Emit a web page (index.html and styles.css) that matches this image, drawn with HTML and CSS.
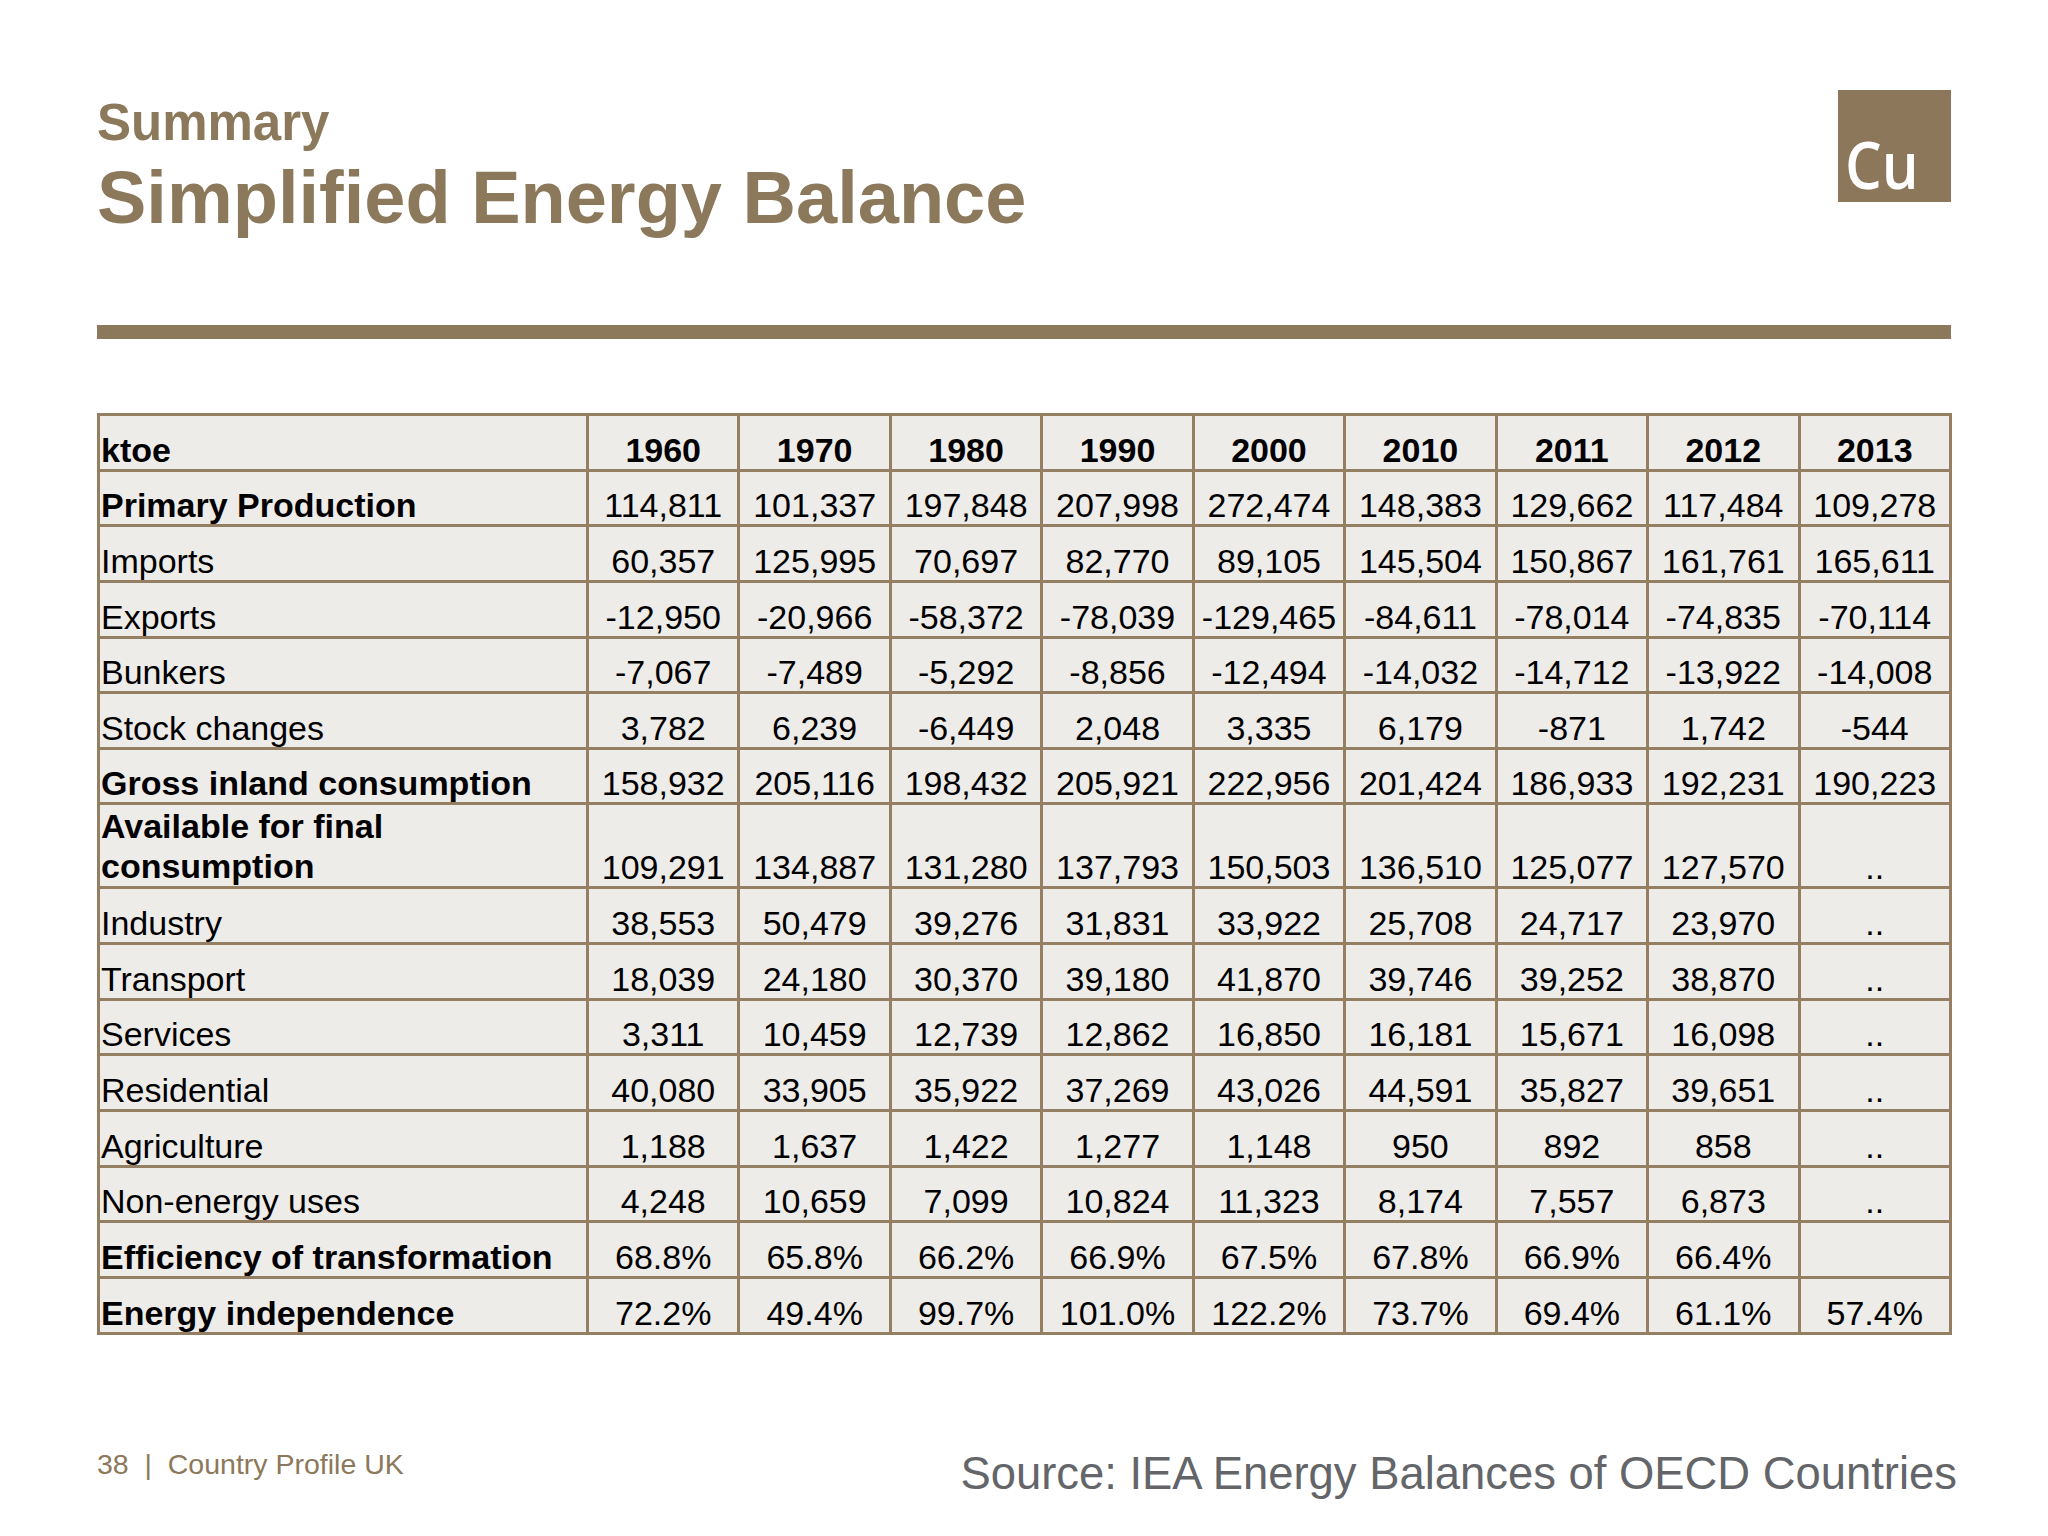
FILE: index.html
```html
<!DOCTYPE html>
<html lang="en">
<head>
<meta charset="utf-8">
<title>Simplified Energy Balance</title>
<link rel="stylesheet" href="styles.css">
</head>
<body>
<div class="page">
  <header class="header">
    <div class="titles">
      <div class="kicker">Summary</div>
      <h1 class="title">Simplified Energy Balance</h1>
    </div>
    <div class="logo"><span class="logo-text">Cu</span></div>
  </header>
  <div class="rule"></div>
  <table class="balance">
    <colgroup><col class="c-label"><col><col><col><col><col><col><col><col><col></colgroup>
    <tr class="head"><td class="lbl b">ktoe</td><td>1960</td><td>1970</td><td>1980</td><td>1990</td><td>2000</td><td>2010</td><td>2011</td><td>2012</td><td>2013</td></tr>
    <tr><td class="lbl b">Primary Production</td><td>114,811</td><td>101,337</td><td>197,848</td><td>207,998</td><td>272,474</td><td>148,383</td><td>129,662</td><td>117,484</td><td>109,278</td></tr>
    <tr><td class="lbl">Imports</td><td>60,357</td><td>125,995</td><td>70,697</td><td>82,770</td><td>89,105</td><td>145,504</td><td>150,867</td><td>161,761</td><td>165,611</td></tr>
    <tr><td class="lbl">Exports</td><td>-12,950</td><td>-20,966</td><td>-58,372</td><td>-78,039</td><td>-129,465</td><td>-84,611</td><td>-78,014</td><td>-74,835</td><td>-70,114</td></tr>
    <tr><td class="lbl">Bunkers</td><td>-7,067</td><td>-7,489</td><td>-5,292</td><td>-8,856</td><td>-12,494</td><td>-14,032</td><td>-14,712</td><td>-13,922</td><td>-14,008</td></tr>
    <tr><td class="lbl">Stock changes</td><td>3,782</td><td>6,239</td><td>-6,449</td><td>2,048</td><td>3,335</td><td>6,179</td><td>-871</td><td>1,742</td><td>-544</td></tr>
    <tr><td class="lbl b">Gross inland consumption</td><td>158,932</td><td>205,116</td><td>198,432</td><td>205,921</td><td>222,956</td><td>201,424</td><td>186,933</td><td>192,231</td><td>190,223</td></tr>
    <tr class="tall"><td class="lbl b">Available for final<br>consumption</td><td>109,291</td><td>134,887</td><td>131,280</td><td>137,793</td><td>150,503</td><td>136,510</td><td>125,077</td><td>127,570</td><td>..</td></tr>
    <tr><td class="lbl">Industry</td><td>38,553</td><td>50,479</td><td>39,276</td><td>31,831</td><td>33,922</td><td>25,708</td><td>24,717</td><td>23,970</td><td>..</td></tr>
    <tr><td class="lbl">Transport</td><td>18,039</td><td>24,180</td><td>30,370</td><td>39,180</td><td>41,870</td><td>39,746</td><td>39,252</td><td>38,870</td><td>..</td></tr>
    <tr><td class="lbl">Services</td><td>3,311</td><td>10,459</td><td>12,739</td><td>12,862</td><td>16,850</td><td>16,181</td><td>15,671</td><td>16,098</td><td>..</td></tr>
    <tr><td class="lbl">Residential</td><td>40,080</td><td>33,905</td><td>35,922</td><td>37,269</td><td>43,026</td><td>44,591</td><td>35,827</td><td>39,651</td><td>..</td></tr>
    <tr><td class="lbl">Agriculture</td><td>1,188</td><td>1,637</td><td>1,422</td><td>1,277</td><td>1,148</td><td>950</td><td>892</td><td>858</td><td>..</td></tr>
    <tr><td class="lbl">Non-energy uses</td><td>4,248</td><td>10,659</td><td>7,099</td><td>10,824</td><td>11,323</td><td>8,174</td><td>7,557</td><td>6,873</td><td>..</td></tr>
    <tr><td class="lbl b">Efficiency of transformation</td><td>68.8%</td><td>65.8%</td><td>66.2%</td><td>66.9%</td><td>67.5%</td><td>67.8%</td><td>66.9%</td><td>66.4%</td><td></td></tr>
    <tr><td class="lbl b">Energy independence</td><td>72.2%</td><td>49.4%</td><td>99.7%</td><td>101.0%</td><td>122.2%</td><td>73.7%</td><td>69.4%</td><td>61.1%</td><td>57.4%</td></tr>
  </table>
  <footer class="footer">
    <div class="pageno">38&nbsp;&nbsp;|&nbsp;&nbsp;Country Profile UK</div>
    <div class="source">Source: IEA Energy Balances of OECD Countries</div>
  </footer>
</div>
</body>
</html>
```
FILE: styles.css
```css
html, body {
  margin: 0;
  padding: 0;
  background: #ffffff;
}

.page {
  box-sizing: content-box;
  width: 1855px;
  padding: 90px 0 0 97px;
  font-family: "Liberation Sans", Arial, sans-serif;
}

.header {
  display: flex;
  justify-content: space-between;
  align-items: flex-start;
}

.titles {
  padding-top: 3px;
}

.kicker {
  font-weight: bold;
  font-size: 51px;
  line-height: 60px;
  color: #8c785a;
}

.title {
  margin: 0;
  font-weight: bold;
  font-size: 74px;
  line-height: 90px;
  color: #8c785a;
}

.logo {
  width: 113px;
  height: 112px;
  margin-right: 1px;
  background: #8c775a;
  box-sizing: border-box;
  padding: 40px 0 0 7px;
}

.logo-text {
  display: inline-block;
  font-family: "Open Sans", "DejaVu Sans", sans-serif;
  font-weight: 600;
  font-size: 66px;
  line-height: 66px;
  color: #ffffff;
  transform: scaleX(0.88);
  transform-origin: left center;
}

.rule {
  margin-top: 82px;
  width: 1854px;
  height: 14px;
  background: #8c785a;
}

.balance {
  margin-top: 74px;
  width: 1855px;
  border-collapse: collapse;
  table-layout: fixed;
  background: #eeece9;
  font-size: 34px;
  line-height: 38px;
  color: #000000;
}

.c-label {
  width: 489px;
}

.balance tr {
  height: 55.65px;
}

.balance tr.tall {
  height: 84px;
}

.balance td {
  border: 3px solid #957f62;
  padding: 0;
  vertical-align: bottom;
  text-align: center;
  white-space: nowrap;
}

.balance td.lbl {
  text-align: left;
  padding-left: 1px;
}

.balance tr.tall td.lbl {
  line-height: 40px;
}

.balance .b,
.balance tr.head td {
  font-weight: bold;
}

.footer {
  display: flex;
  justify-content: space-between;
  align-items: flex-start;
  margin-top: 113px;
  margin-right: -5px;
}

.pageno {
  font-size: 28.5px;
  line-height: 32px;
  color: #8c785a;
}

.source {
  font-size: 45.4px;
  line-height: 52px;
  color: #636569;
}
```
